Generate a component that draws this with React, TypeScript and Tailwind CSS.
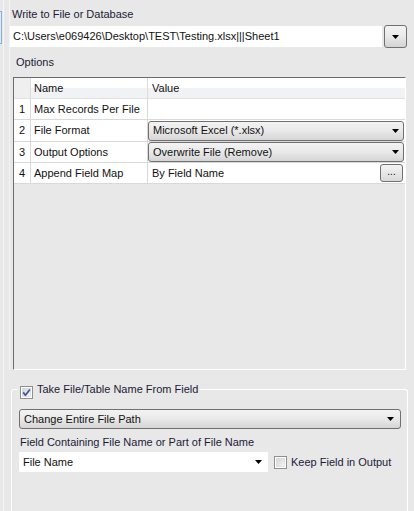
import React from "react";

type Row = {
  n: number;
  name: string;
  h: string;
  kind: "empty" | "combo" | "browse";
  value?: string;
};

const rows: Row[] = [
  { n: 1, name: "Max Records Per File", h: "h-[21px]", kind: "empty" },
  { n: 2, name: "File Format", h: "h-[22px]", kind: "combo", value: "Microsoft Excel (*.xlsx)" },
  { n: 3, name: "Output Options", h: "h-[21px]", kind: "combo", value: "Overwrite File (Remove)" },
  { n: 4, name: "Append Field Map", h: "h-[21px]", kind: "browse", value: "By Field Name" },
];

function Arrow() {
  return (
    <svg width="7" height="4" viewBox="0 0 7 4" className="shrink-0">
      <polygon points="0,0 7,0 3.5,4" fill="#000" />
    </svg>
  );
}

function CheckBox({ checked, id }: { checked?: boolean; id: string }) {
  return (
    <svg width="13" height="13" viewBox="0 0 13 13" className="shrink-0">
      <defs>
        <linearGradient id={id} x1="0" y1="0" x2="1" y2="1">
          <stop offset="0" stopColor="#cfd2d6" />
          <stop offset="1" stopColor="#f7f7f7" />
        </linearGradient>
      </defs>
      <rect x="0.5" y="0.5" width="12" height="12" fill="#fff" stroke="#8e8f8f" />
      <rect x="2.5" y="2.5" width="8" height="8" fill={`url(#${id})`} stroke="#d2d4d8" strokeWidth="0.6" />
      {checked && (
        <path d="M3.2 6.4 L5.4 9.2 L9.9 3.4" fill="none" stroke="#3c55a0" strokeWidth="1.7" strokeLinejoin="round" />
      )}
    </svg>
  );
}

// grey win7 style dropdown
function Combo({ text, className }: { text: string; className: string }) {
  return (
    <div
      className={`flex items-center justify-between rounded-[3px] border border-[#707070] bg-linear-to-b from-[#f3f3f3] via-[#e9e9e9] to-[#d5d5d5] pl-[4px] text-[#111] ${className}`}
    >
      <span className="truncate">{text}</span>
      <Arrow />
    </div>
  );
}

export default function App() {
  return (
    <div className="relative h-[511px] w-[414px] overflow-hidden bg-[#e8e8e8] pl-[3px] font-['Liberation_Sans',Arial,sans-serif] text-[11px] leading-[13px] text-[#1b1b36]">
      <div className="absolute left-0 top-[11px] h-[33px] w-[2px] border-b border-r border-t border-[#7fb3e6]" />

      <div className="h-full border-l border-[#f5f5f5]">
        <div className="ml-[5px] border-l border-[#f4f4f4] pt-[8px]">
          <div className="h-[13px] pl-[2px]">Write to File or Database</div>

          <div className="mt-[4px] flex h-[23px] items-center">
            <div className="flex h-[21px] w-[372px] items-center bg-white pl-[3px] text-[#111]">
              C:\Users\e069426\Desktop\TEST\Testing.xlsx|||Sheet1
            </div>
            <div className="ml-[2px] flex h-[23px] w-[23px] items-center justify-center rounded-[3px] border border-[#707070] bg-linear-to-b from-[#f3f3f3] via-[#e9e9e9] to-[#d3d3d3]">
              <Arrow />
            </div>
          </div>

          <div className="mt-[8px] h-[13px] pl-[6px]">Options</div>

          <div className="ml-[3px] mt-[8px] flex h-[293px] w-[393px] flex-col border border-[#6c6c6c] border-b-white border-r-white">
            <div className="grid h-[21px] grid-cols-[17px_117px_1fr] border-b border-[#e1e2e4] text-[#111]">
              <div className="border-r border-[#dcdcdc] bg-[#efefef]" />
              <div className="flex items-center border-r border-[#dcdcdc] bg-linear-to-b from-white from-50% to-[#f1f2f4] to-50% pl-[3px]">
                Name
              </div>
              <div className="flex items-center bg-linear-to-b from-white from-50% to-[#f1f2f4] to-50% pl-[4px]">
                Value
              </div>
            </div>

            {rows.map((r) => (
              <div
                key={r.n}
                className={`grid grid-cols-[17px_117px_1fr] border-b border-[#d9d9d9] bg-white text-[#111] ${r.h}`}
              >
                <div className="flex items-center justify-center border-r border-[#d9d9d9]">{r.n}</div>
                <div className="flex items-center border-r border-[#d9d9d9] pl-[3px]">{r.name}</div>
                <div className="flex items-center">
                  {r.kind === "combo" && <Combo text={r.value!} className="h-[20px] w-[256px] pr-[4px]" />}
                  {r.kind === "browse" && (
                    <div className="flex w-full items-center justify-between pl-[4px] pr-[2px]">
                      <span>{r.value}</span>
                      <div className="flex h-[18px] w-[23px] items-center justify-center rounded-[3px] border border-[#707070] bg-linear-to-b from-[#f4f4f4] to-[#dadada] pb-[3px] text-[10px] leading-none">
                        ...
                      </div>
                    </div>
                  )}
                </div>
              </div>
            ))}
          </div>
        </div>

        <div className="ml-[7px] mt-[19px] h-[140px] w-[397px] rounded-t-[3px] border-l border-r border-t border-white">
          <div className="-mt-[7px] ml-[6px] flex h-[16px] w-fit items-start bg-[#e8e8e8] pl-[2px] pr-[2px]">
            <div className="mt-[3px]">
              <CheckBox checked id="cbTake" />
            </div>
            <span className="ml-[4px]">Take File/Table Name From Field</span>
          </div>

          <Combo text="Change Entire File Path" className="ml-[7px] mt-[10px] h-[20px] w-[382px] pr-[6px]" />

          <div className="ml-[8px] mt-[7px] h-[13px]">Field Containing File Name or Part of File Name</div>

          <div className="ml-[7px] mt-[3px] flex items-center">
            <div className="flex h-[20px] w-[249px] items-center justify-between bg-white pl-[4px] pr-[6px] text-[#111]">
              <span>File Name</span>
              <Arrow />
            </div>
            <div className="ml-[6px]">
              <CheckBox id="cbKeep" />
            </div>
            <span className="ml-[4px]">Keep Field in Output</span>
          </div>
        </div>
      </div>
    </div>
  );
}
